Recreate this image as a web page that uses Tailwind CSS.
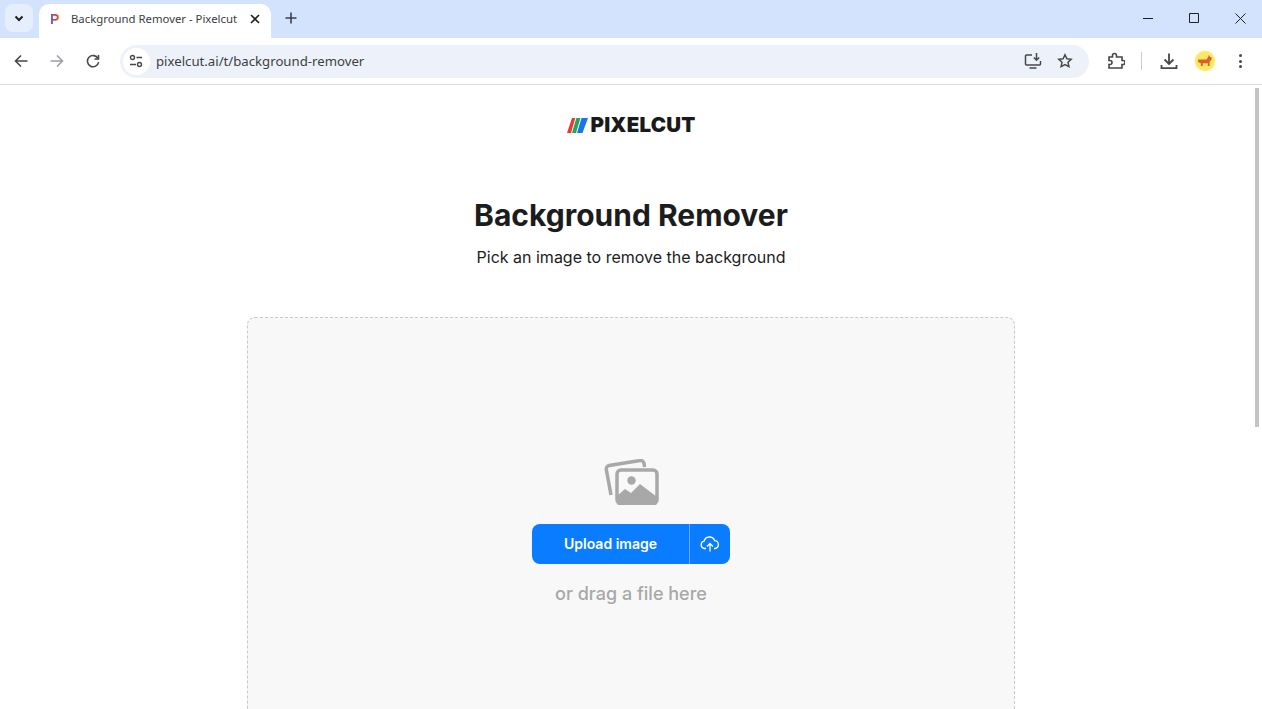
<!DOCTYPE html>
<html lang="en">
<head>
    <meta charset="UTF-8">
    <title>Background Remover - Pixelcut</title>
    <script src="https://cdn.jsdelivr.net/npm/@tailwindcss/browser@4"></script>
</head>
<body class="w-[1262px] h-[709px] overflow-hidden bg-white font-['Inter',sans-serif] flex flex-col">
    <!-- Tab strip -->
    <div class="h-[38px] bg-[#d3e3fd] flex items-end shrink-0 relative">
        <div class="w-[28px] h-[28px] ml-[5px] mb-[6px] rounded-lg bg-[#e6eefb] flex items-center justify-center">
            <svg width="12" height="12" viewBox="0 0 12 12" fill="none" stroke="#1f1f1f" stroke-width="2"><path d="M2.500 4.500 6 8l3.500-3.500"/></svg>
        </div>
        <div class="w-[232px] h-[34px] ml-[6px] bg-white rounded-t-[10px] flex items-center pl-[11px] pr-[11px] pb-[5px]">
            <span class="w-[10px] text-[14px] leading-none font-black font-['Liberation_Sans',sans-serif] text-transparent bg-clip-text bg-gradient-to-r from-[#4a5fd0] via-[#c0443f] to-[#e8603a]">P</span>
            <span class="ml-[11px] text-[11.350px] text-[#3c4043] font-['Noto_Sans',sans-serif] whitespace-nowrap">Background Remover - Pixelcut</span>
            <svg class="ml-auto" width="10" height="10" viewBox="0 0 10 10" stroke="#1f1f1f" stroke-width="1.600"><path d="M1 1l8 8M9 1l-8 8"/></svg>
        </div>
        <svg class="ml-[14px] mb-[14px]" width="12" height="12" viewBox="0 0 12 12" stroke="#3c4043" stroke-width="1.600"><path d="M6 .5v11M.5 6h11"/></svg>
        <div class="ml-auto flex items-center h-[36px] self-start pr-[16px] gap-[36px]">
            <svg width="10" height="10" viewBox="0 0 10 10" stroke="#1f1f1f" stroke-width="1"><path d="M0 5.500h10"/></svg>
            <svg width="10" height="10" viewBox="0 0 10 10" fill="none" stroke="#1f1f1f" stroke-width="1"><path d="M.5.500h9v9h-9z"/></svg>
            <svg width="11" height="11" viewBox="0 0 11 11" stroke="#1f1f1f" stroke-width="1"><path d="M.5.500l10 10M10.500.500l-10 10"/></svg>
        </div>
    </div>

    <!-- Toolbar -->
    <div class="h-[47px] bg-white border-b border-[#dadce0] flex items-center shrink-0 relative">
        <svg class="ml-[14px]" width="14" height="14" viewBox="0 0 14 14" fill="none" stroke="#474747" stroke-width="1.600"><path d="M13.500 7H1.500M7 1.500 1.500 7 7 12.500"/></svg>
        <svg class="ml-[22px]" width="14" height="14" viewBox="0 0 14 14" fill="none" stroke="#9aa0a6" stroke-width="1.600"><path d="M.5 7h12M7 1.500 12.500 7 7 12.500"/></svg>
        <svg class="ml-[22px]" width="14" height="14" viewBox="0 0 14 14" fill="none" stroke="#474747" stroke-width="1.600"><path d="M12 4.500A5.600 5.600 0 1 0 12.600 8"/><path d="M12.500 1v4h-4" /></svg>
        <div class="ml-[20px] w-[969px] h-[33px] bg-[#edf2fa] rounded-full flex items-center pl-[3px]">
            <div class="w-[27px] h-[27px] bg-white rounded-full flex items-center justify-center">
                <svg class="-ml-[2px]" width="14" height="14" viewBox="0 0 14 14" fill="none" stroke="#474747" stroke-width="1.400"><circle cx="3.500" cy="3.500" r="2"/><path d="M7.500 3.500H13M1 10.500h6"/><circle cx="10.500" cy="10.500" r="2"/></svg>
            </div>
            <span class="ml-[6px] pt-px text-[13.200px] text-[#3c4043] font-['Noto_Sans',sans-serif] whitespace-nowrap">pixelcut.ai/t/background-remover</span>
            <svg class="ml-auto" width="18" height="16" viewBox="0 0 18 16" fill="none" stroke="#474747" stroke-width="1.500"><path d="M8 2H2.500a1 1 0 0 0-1 1v8a1 1 0 0 0 1 1h13a1 1 0 0 0 1-1V8M5.500 15h7"/><path d="M12.500 0v7M9.800 4.500l2.700 2.700 2.700-2.700"/></svg>
            <svg class="ml-[15px] mr-[16px]" width="16" height="16" viewBox="0 0 16 16" fill="none" stroke="#474747" stroke-width="1.500"><path d="M8 1.800l1.900 4 4.300.500-3.200 3 .9 4.300L8 11.500l-3.900 2.100.9-4.300-3.200-3 4.300-.5z"/></svg>
        </div>
        <svg class="ml-[18px]" width="18" height="18" viewBox="0 0 18 18" fill="none" stroke="#474747" stroke-width="1.600"><path d="M2 5h3.500V3.500a2 2 0 0 1 4 0V5H15v3.500h1a2 2 0 0 1 0 4h-1V16H2v-3.500h1a2 2 0 0 0 0-4H2z"/></svg>
        <div class="ml-[16px] w-px h-[18px] bg-[#c7ccd4]"></div>
        <svg class="ml-[18px]" width="18" height="18" viewBox="0 0 18 18" fill="none" stroke="#474747" stroke-width="1.800"><path d="M9 1.500v10M4.500 7.500 9 12l4.500-4.500M1.500 13v3.200h15V13"/></svg>
        <div class="ml-[17px] w-[20px] h-[20px] rounded-full bg-[#fbe866] shadow-[0_0_3px_#fdf1a0] flex items-center justify-center">
            <svg width="14" height="12" viewBox="0 0 15 13" fill="#d9602a"><path d="M0 5h9l2-2.500L11.500 0l1.500 2 2 1-1 3-1.500 1v5h-2V9H5v3H3V9L0 7.500z"/></svg>
        </div>
        <div class="ml-[24px] flex flex-col gap-[2.500px]">
            <span class="w-[3px] h-[3px] rounded-full bg-[#474747]"></span>
            <span class="w-[3px] h-[3px] rounded-full bg-[#474747]"></span>
            <span class="w-[3px] h-[3px] rounded-full bg-[#474747]"></span>
        </div>
    </div>

    <!-- Page -->
    <div class="relative flex-1 overflow-hidden">
        <div class="absolute right-[3px] top-[3px] w-[4px] h-[339px] bg-[#c4c4c4]"></div>
        <div class="w-[1262px] flex flex-col items-center">
            <div class="mt-[30px] flex items-center gap-[3px] h-[20px]">
                <svg width="21" height="15" viewBox="0 0 21 15">
                    <path d="M5 0h3.300L4 15H0z" fill="#ea3a2d"/>
                    <path d="M9.300 0h4.200L9 15H5z" fill="#25a55f"/>
                    <path d="M14.500 0H21l-5.500 15H10z" fill="#1976e8"/>
                </svg>
                <span class="text-[20.500px] leading-none font-black tracking-[0.2px] text-[#1a1a1a]">PIXELCUT</span>
            </div>
            <h1 class="mt-[60px] text-[30px] leading-[40px] font-bold text-[#1b1c1d]">Background Remover</h1>
            <p class="mt-[10px] text-[16px] leading-[24px] text-[#1b1c1d]">Pick an image to remove the background</p>
            <div class="mt-[48px] w-[768px] h-[500px] bg-[#f8f8f8] border border-dashed border-[#c9c9c9] rounded-[8px] flex flex-col items-center pt-[141px]">
                <svg width="56" height="46" viewBox="0 0 56 46" fill="none">
                    <path d="M8 36 3.300 10.500a3.500 3.500 0 0 1 2.800-4L37 1.500a3.500 3.500 0 0 1 4 2.800l.6 3.700" stroke="#a8a8a8" stroke-width="3.500"/>
                    <rect x="14" y="11" width="40" height="33.500" rx="4" stroke="#a8a8a8" stroke-width="3.500"/>
                    <circle cx="28.500" cy="21.500" r="4.200" fill="#a8a8a8"/>
                    <path d="M14 42V37l8-7 6 4 9-9 17 13v6a2 2 0 0 1-2 2H16a2 2 0 0 1-2-2z" fill="#a8a8a8"/>
                </svg>
                <div class="mt-[19px] w-[198px] h-[40px] bg-[#0a7cff] rounded-[8px] flex text-white">
                    <div class="w-[158px] pb-px flex items-center justify-center text-[14px] font-semibold border-r border-[#6db0ff]">Upload image</div>
                    <div class="flex-1 flex items-center justify-center">
                        <svg width="20" height="16" viewBox="0 0 20 16" fill="none" stroke="white" stroke-width="1.300"><path d="M6 12.500H4.500a3.700 3.700 0 0 1-.4-7.300 5.500 5.500 0 0 1 10.500-.6 4 4 0 0 1 .6 7.900H14"/><path d="M10 15.500V7.500M7 10.500l3-3 3 3"/></svg>
                    </div>
                </div>
                <p class="mt-[18px] text-[18px] leading-[24px] font-medium text-[#a8a8a8]">or drag a file here</p>
            </div>
        </div>
    </div>
</body>
</html>
